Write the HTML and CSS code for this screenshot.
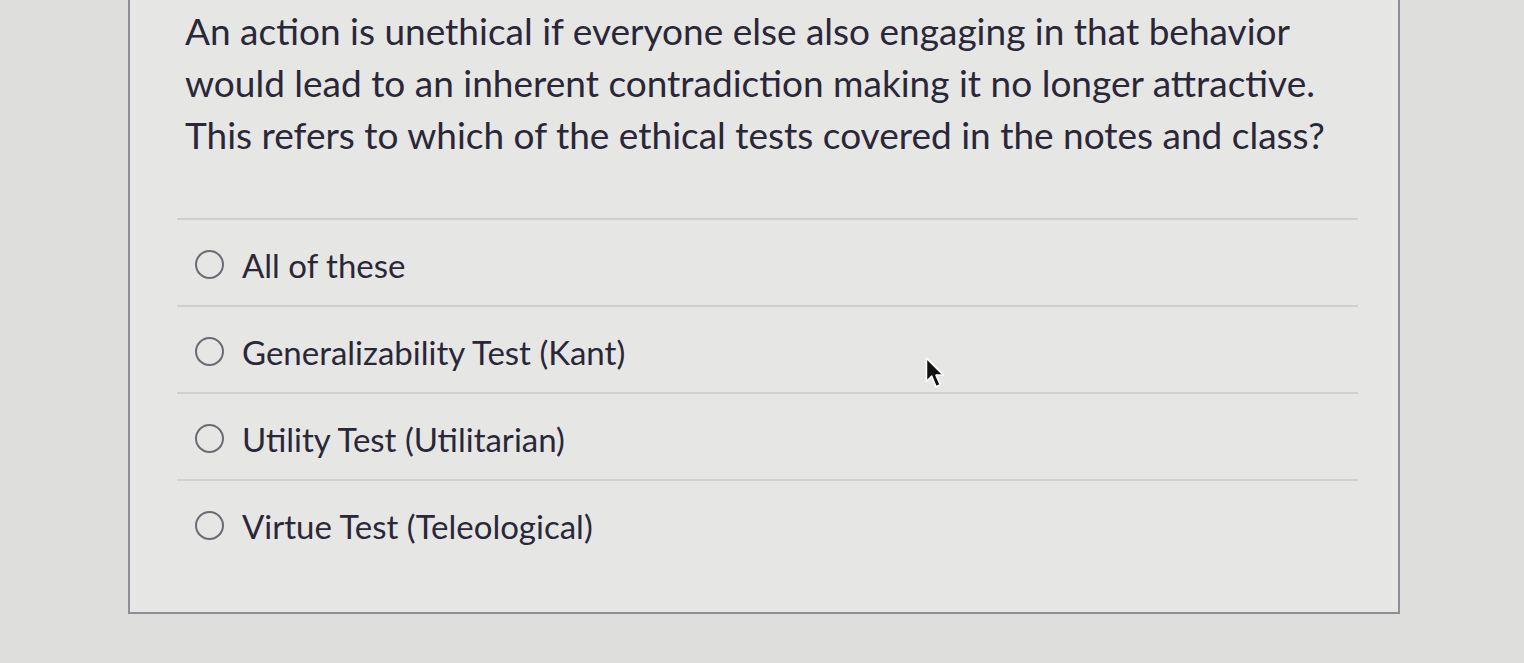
FILE: index.html
```html
<!DOCTYPE html>
<html lang="en">
<head>
<meta charset="utf-8">
<title>Quiz question</title>
<link rel="stylesheet" href="styles.css">
</head>
<body>
<div class="card">
  <p class="question">An action is unethical if everyone else also engaging in that behavior<br>would lead to an inherent contradiction making it no longer attractive.<br>This refers to which of the ethical tests covered in the notes and class?</p>
  <div class="answers">
    <label class="answer"><span class="radio"></span><span class="label-text">All of these</span></label>
    <label class="answer"><span class="radio"></span><span class="label-text">Generalizability Test (Kant)</span></label>
    <label class="answer"><span class="radio"></span><span class="label-text">Utility Test (Utilitarian)</span></label>
    <label class="answer"><span class="radio"></span><span class="label-text">Virtue Test (Teleological)</span></label>
  </div>
</div>
<svg class="cursor" width="24" height="34" viewBox="0 0 22 32" aria-hidden="true">
  <path d="M2 2 L2 24 L7 19 L11 29 L15 27 L11 18 L18 18 Z" fill="#111" stroke="#fff" stroke-width="1.5" stroke-linejoin="round"/>
</svg>
</body>
</html>
```
FILE: styles.css
```css
html, body {
  margin: 0;
  height: 663px;
  overflow: hidden;
}
body {
  background: #dededc;
  font-family: Lato, "Open Sans", "Liberation Sans", sans-serif;
  color: #2a2738;
  position: relative;
}
.card {
  margin-left: 128px;
  width: 1272px;
  height: 614px;
  box-sizing: border-box;
  background: #e6e6e4;
  border: 2px solid #8f8e96;
  border-top: none;
  padding: 5px 0 0 55px;
}
.question {
  margin: 0;
  font-size: 37px;
  line-height: 52px;
}
.answers {
  margin: 57px 40px 0 -8px;
  display: flex;
  flex-direction: column;
}
.answer {
  display: flex;
  align-items: center;
  height: 87px;
  box-sizing: border-box;
  border-top: 2px solid #d0d0ce;
  padding: 4px 0 0 18px;
  font-size: 33px;
}
.radio {
  width: 29px;
  height: 29px;
  box-sizing: border-box;
  border: 2px solid #6c6b74;
  border-radius: 50%;
  margin-right: 18px;
  flex: none;
}
.cursor {
  position: absolute;
  left: 924px;
  top: 356px;
}
```
